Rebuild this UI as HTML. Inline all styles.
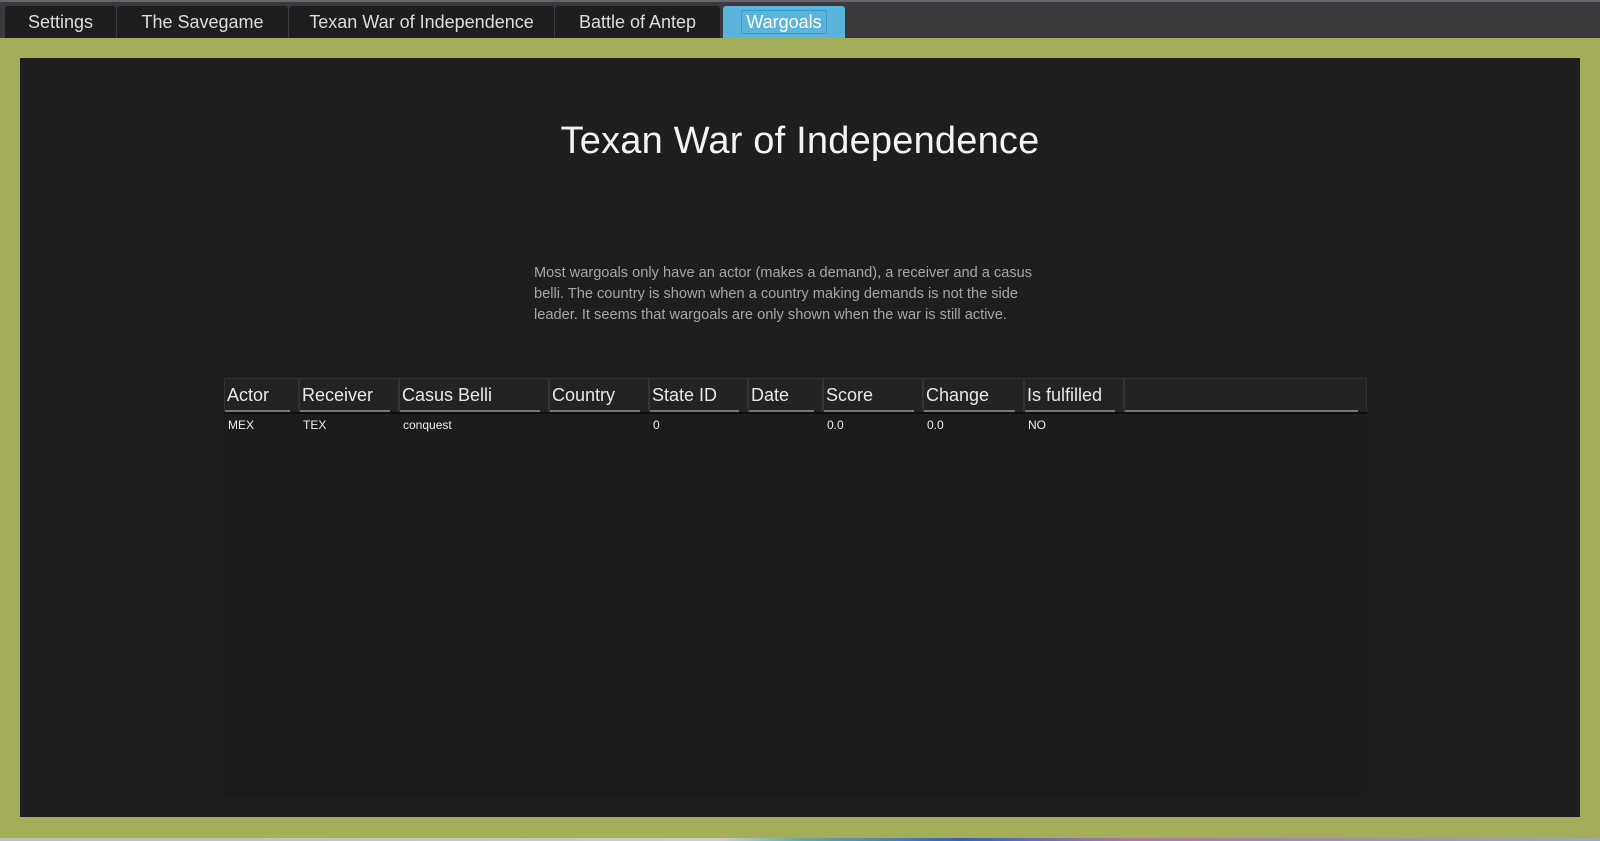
<!DOCTYPE html>
<html><head><meta charset="utf-8"><style>
*{margin:0;padding:0;box-sizing:border-box}
body{width:1600px;height:841px;overflow:hidden;background:#a3ad5a;font-family:"Liberation Sans",sans-serif;position:relative}
.top{position:absolute;left:0;top:0;width:1600px;height:38px;background:#3a393b;border-top:2px solid #6a6470}
.tab{position:absolute;top:6px;height:32px;background:#1e1e1e;color:#ddd;font-size:18px;line-height:32px;text-align:center;border-radius:3px 3px 0 0}
.tab.act{background:#5ab4db}
.tab.act span{border:1px solid #3a9cc8;padding:1px 4px;color:#fff}
.panel{position:absolute;left:20px;top:58px;width:1560px;height:759px;background:#1e1e1e}
h1{position:absolute;left:0;width:1600px;top:120px;text-align:center;color:#f4f4f4;font-weight:normal;font-size:38px;letter-spacing:0.2px}
.p{position:absolute;left:534px;top:263px;color:#a6a6a6;font-size:14.6px;line-height:21px;white-space:nowrap}
.tbl{position:absolute;left:224px;top:378px;width:1143px;height:418px;background:#1c1c1c}
.hd{position:absolute;top:378px;height:34px;background:#232323;border:1px solid #333;border-bottom:none;color:#e8e8e8;font-size:18px;line-height:32px;padding-left:2px;white-space:nowrap;overflow:hidden}
.hd:after{content:"";position:absolute;left:0;right:8px;bottom:0;height:2px;background:#777}
.line{position:absolute;left:224px;top:412px;width:1143px;height:2px;background:#0e0e0e}
.c{position:absolute;top:418px;color:#eee;font-size:12px;line-height:14px}
.strip{position:absolute;left:0;top:838px;width:1600px;height:3px;background:linear-gradient(90deg,#bbb,#ccc 45%,#6aa 50%,#36a 60%,#a7a 70%,#9ab)}
</style></head><body>
<div class="top"></div>
<div class="tab" style="left:5px;width:111px">Settings</div>
<div class="tab" style="left:117px;width:171px">The Savegame</div>
<div class="tab" style="left:289px;width:265px">Texan War of Independence</div>
<div class="tab" style="left:555px;width:165px">Battle of Antep</div>
<div class="tab act" style="left:723px;width:122px"><span>Wargoals</span></div>
<div class="panel"></div>
<h1>Texan War of Independence</h1>
<div class="p">Most wargoals only have an actor (makes a demand), a receiver and a casus<br>belli. The country is shown when a country making demands is not the side<br>leader. It seems that wargoals are only shown when the war is still active.</div>
<div class="tbl"></div>
<div class="hd" style="left:224px;width:75px">Actor</div>
<div class="hd" style="left:299px;width:100px">Receiver</div>
<div class="hd" style="left:399px;width:150px">Casus Belli</div>
<div class="hd" style="left:549px;width:100px">Country</div>
<div class="hd" style="left:649px;width:99px">State ID</div>
<div class="hd" style="left:748px;width:75px">Date</div>
<div class="hd" style="left:823px;width:100px">Score</div>
<div class="hd" style="left:923px;width:101px">Change</div>
<div class="hd" style="left:1024px;width:100px">Is fulfilled</div>
<div class="hd" style="left:1124px;width:243px"></div>
<div class="line"></div>
<div class="c" style="left:228px">MEX</div>
<div class="c" style="left:303px">TEX</div>
<div class="c" style="left:403px">conquest</div>
<div class="c" style="left:653px">0</div>
<div class="c" style="left:827px">0.0</div>
<div class="c" style="left:927px">0.0</div>
<div class="c" style="left:1028px">NO</div>
<div class="strip"></div>
</body></html>
